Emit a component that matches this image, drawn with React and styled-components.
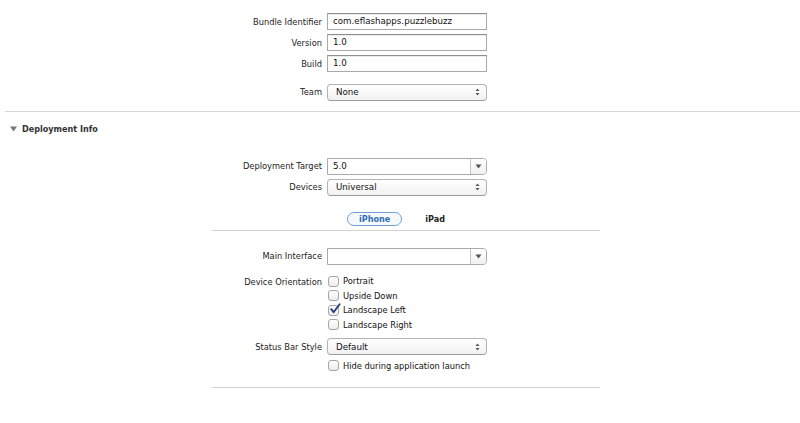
import React from 'react'
import styled, { createGlobalStyle } from 'styled-components'

const GlobalStyle = createGlobalStyle`
  html, body {
    margin: 0;
    padding: 0;
    background: #fff;
  }
  body {
    font-family: 'DejaVu Sans', 'Liberation Sans', sans-serif;
    font-size: 8.7px;
    color: #222;
  }
`

const PopupArrows = () => (
  <svg width="5" height="8" viewBox="0 0 5 8">
    <path d="M0.5 3 L2.5 0.5 L4.5 3 Z" fill="#555" />
    <path d="M0.5 5 L2.5 7.5 L4.5 5 Z" fill="#555" />
  </svg>
)

const ComboArrow = () => (
  <svg width="7" height="5" viewBox="0 0 7 5">
    <path d="M0.5 0.5 L6.5 0.5 L3.5 4.5 Z" fill="#555" />
  </svg>
)

const Check = () => (
  <svg width="12" height="12" viewBox="0 0 12 12">
    <path d="M2.2 6.2 L4.6 9.2 L10.6 1.2" fill="none" stroke="#23407a" strokeWidth="1.9" strokeLinecap="round" strokeLinejoin="round" />
  </svg>
)

const TextField = ({ value }) => <Field>{value}</Field>

const Popup = ({ value }) => (
  <PopupButton>
    <span>{value}</span>
    <PopupArrows />
  </PopupButton>
)

const Combo = ({ value }) => (
  <ComboBox>
    <ComboText>{value}</ComboText>
    <ComboButton>
      <ComboArrow />
    </ComboButton>
  </ComboBox>
)

const CheckItem = ({ label, checked }) => (
  <CheckRow>
    <Box>{checked && <Check />}</Box>
    <span>{label}</span>
  </CheckRow>
)

export default function App() {
  return (
    <Page>
      <GlobalStyle />
      <Form $top={13}>
        <Label>Bundle Identifier</Label>
        <TextField value="com.eflashapps.puzzlebuzz" />
        <Label>Version</Label>
        <TextField value="1.0" />
        <Label>Build</Label>
        <TextField value="1.0" />
        <Label $space={7.5}>Team</Label>
        <Control $space={7.5}>
          <Popup value="None" />
        </Control>
      </Form>

      <Divider />

      <SectionHeader>
        <svg width="7" height="6" viewBox="0 0 7 6">
          <path d="M0 0.5 L7 0.5 L3.5 5.5 Z" fill="#777" />
        </svg>
        <span>Deployment Info</span>
      </SectionHeader>

      <Form $top={21}>
        <Label>Deployment Target</Label>
        <Combo value="5.0" />
        <Label>Devices</Label>
        <Popup value="Universal" />
      </Form>

      <Tabs>
        <Tab $active>iPhone</Tab>
        <Tab>iPad</Tab>
      </Tabs>

      <InnerDivider $top={4} />

      <Form $top={17}>
        <Label>Main Interface</Label>
        <Combo value="" />
        <Label $space={7} $align="start">Device Orientation</Label>
        <Checks $space={7}>
          <CheckItem label="Portrait" />
          <CheckItem label="Upside Down" />
          <CheckItem label="Landscape Left" checked />
          <CheckItem label="Landscape Right" />
        </Checks>
        <Label $space={4}>Status Bar Style</Label>
        <Control $space={4}>
          <Popup value="Default" />
        </Control>
        <span />
        <Checks $space={1}>
          <CheckItem label="Hide during application launch" />
        </Checks>
      </Form>

      <InnerDivider $top={16} />
    </Page>
  )
}

const Page = styled.div`
  width: 800px;
  height: 423px;
  overflow: hidden;
`

const Form = styled.div`
  display: grid;
  grid-template-columns: 110px 160px;
  column-gap: 5px;
  row-gap: 4px;
  margin-left: 212px;
  padding-top: ${p => p.$top || 0}px;
`

const Label = styled.div`
  text-align: right;
  align-self: ${p => p.$align || 'center'};
  margin-top: ${p => p.$space || 0}px;
  font-size: 8.3px;
  color: #222;
  white-space: nowrap;
  line-height: ${p => (p.$align === 'start' ? '12px' : 'normal')};
`

const Control = styled.div`
  margin-top: ${p => p.$space || 0}px;
`

const Field = styled.div`
  box-sizing: border-box;
  height: 17px;
  line-height: 15px;
  padding-left: 5px;
  border: 1px solid #a9a9a9;
  border-top-color: #8e8e8e;
  background: #fff;
  color: #111;
  box-shadow: inset 0 1px 0 #ececec;
`

const PopupButton = styled.div`
  box-sizing: border-box;
  height: 17px;
  display: flex;
  align-items: center;
  justify-content: space-between;
  padding: 0 6px 0 8px;
  border: 1px solid #b3b3b3;
  border-bottom-color: #9c9c9c;
  border-radius: 4px;
  background: linear-gradient(#ffffff, #f1f1f1);
  color: #111;
`

const ComboBox = styled.div`
  box-sizing: border-box;
  height: 17px;
  display: flex;
  border: 1px solid #aaa;
  border-radius: 0 4px 4px 0;
  background: #fff;
`

const ComboText = styled.div`
  flex: 1;
  line-height: 15px;
  padding-left: 5px;
  color: #111;
`

const ComboButton = styled.div`
  width: 15px;
  display: flex;
  align-items: center;
  justify-content: center;
  border-left: 1px solid #c4c4c4;
  background: linear-gradient(#ffffff, #f0f0f0);
  border-radius: 0 3px 3px 0;
`

const Divider = styled.div`
  height: 1px;
  margin: 10px 0 0 5px;
  background: #d6d6d6;
`

const SectionHeader = styled.div`
  display: flex;
  align-items: center;
  gap: 5px;
  height: 16px;
  margin-top: 9px;
  padding-left: 10px;
  font-size: 8.1px;
  font-weight: bold;
  color: #333;
`

const Tabs = styled.div`
  display: flex;
  align-items: center;
  gap: 22px;
  margin: 16px 0 0 347px;
  height: 14px;
`

const Tab = styled.div`
  box-sizing: border-box;
  height: 14px;
  line-height: 12px;
  padding: 0 ${p => (p.$active ? '11px' : '0')};
  border: ${p => (p.$active ? '1px solid #6f9fd4' : '1px solid transparent')};
  border-radius: 7px;
  font-size: 8.1px;
  font-weight: bold;
  color: ${p => (p.$active ? '#2f6db3' : '#222')};
  background: ${p => (p.$active ? '#f6f9fd' : 'transparent')};
`

const InnerDivider = styled.div`
  width: 388px;
  height: 1px;
  margin: ${p => p.$top || 6}px 0 0 212px;
  background: #d3d3d3;
`

const Checks = styled.div`
  display: flex;
  flex-direction: column;
  gap: 3.5px;
  margin-top: ${p => p.$space || 0}px;
`

const CheckRow = styled.div`
  display: flex;
  align-items: center;
  gap: 4px;
  height: 11px;
  font-size: 8.3px;
  color: #111;
`

const Box = styled.div`
  position: relative;
  box-sizing: border-box;
  width: 11px;
  height: 11px;
  flex-shrink: 0;
  margin-left: 1px;
  border: 1px solid #a5a5a5;
  border-radius: 3px;
  background: linear-gradient(#ffffff, #ececec);

  svg {
    position: absolute;
    left: 0px;
    top: -3px;
  }
`
